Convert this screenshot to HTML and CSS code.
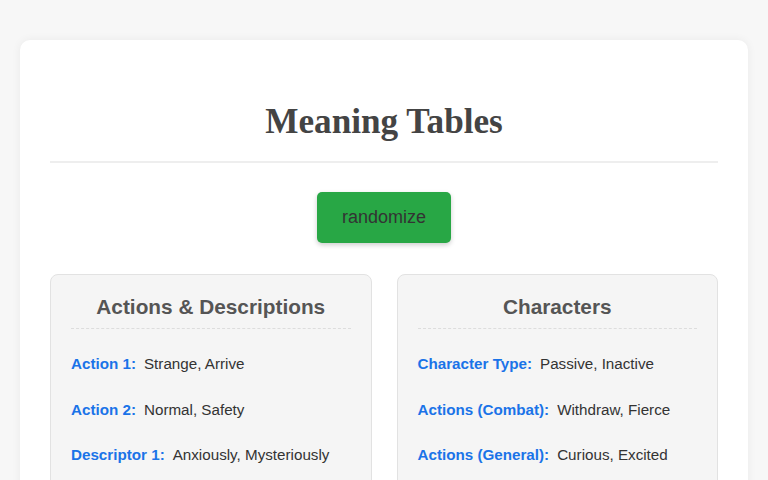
FILE: index.html
```html
<!DOCTYPE html>
<html lang="en">
<head>
<meta charset="utf-8">
<title>Meaning Tables</title>
<link rel="stylesheet" href="styles.css">
</head>
<body>
<main class="container">
  <h1 class="title">Meaning Tables</h1>
  <div class="actions">
    <button class="btn-randomize" type="button">randomize</button>
  </div>
  <div class="tables">
    <section class="card">
      <h2 class="card-title">Actions &amp; Descriptions</h2>
      <div class="row"><span class="label">Action 1:</span><span class="value">Strange, Arrive</span></div>
      <div class="row"><span class="label">Action 2:</span><span class="value">Normal, Safety</span></div>
      <div class="row"><span class="label">Descriptor 1:</span><span class="value">Anxiously, Mysteriously</span></div>
    </section>
    <section class="card">
      <h2 class="card-title">Characters</h2>
      <div class="row"><span class="label">Character Type:</span><span class="value">Passive, Inactive</span></div>
      <div class="row"><span class="label">Actions (Combat):</span><span class="value">Withdraw, Fierce</span></div>
      <div class="row"><span class="label">Actions (General):</span><span class="value">Curious, Excited</span></div>
    </section>
  </div>
</main>
</body>
</html>
```

FILE: styles.css
```css
html, body {
  margin: 0;
  padding: 0;
}
body {
  background: #f7f7f7;
  padding: 40px 20px;
  font-family: "Liberation Sans", Arial, sans-serif;
  color: #333;
}
.container {
  background: #fff;
  border-radius: 10px;
  box-shadow: 0 0 10px rgba(0, 0, 0, 0.06);
  padding: 30px;
}
.title {
  font-family: "Liberation Serif", "Times New Roman", serif;
  font-size: 35.2px;
  font-weight: bold;
  color: #444;
  text-align: center;
  margin: 31px 0 0;
  line-height: 41px;
  padding-bottom: 19px;
  border-bottom: 2px solid #eee;
}
.actions {
  display: flex;
  justify-content: center;
  margin-top: 29px;
}
.btn-randomize {
  font-family: "Liberation Sans", Arial, sans-serif;
  font-size: 18px;
  line-height: 21px;
  color: #333;
  background: #28a745;
  border: none;
  border-radius: 5px;
  padding: 15px 25px;
  box-shadow: 0 2px 5px rgba(0, 0, 0, 0.2);
}
.tables {
  display: grid;
  grid-template-columns: 1fr 1fr;
  gap: 25px;
  margin-top: 31px;
}
.card {
  background: #f5f5f5;
  border: 1px solid #e2e2e2;
  border-radius: 8px;
  padding: 20px;
}
.card-title {
  font-size: 20.8px;
  line-height: 24px;
  font-weight: bold;
  color: #555;
  text-align: center;
  margin: 0 0 12px;
  padding-bottom: 9px;
  border-bottom: 1px dashed #ddd;
}
.row {
  padding: 14px 0;
  font-size: 15.2px;
  line-height: 17.5px;
}
.label {
  font-weight: bold;
  color: #1a73e8;
  margin-right: 8px;
}
.value {
  color: #333;
}
```
